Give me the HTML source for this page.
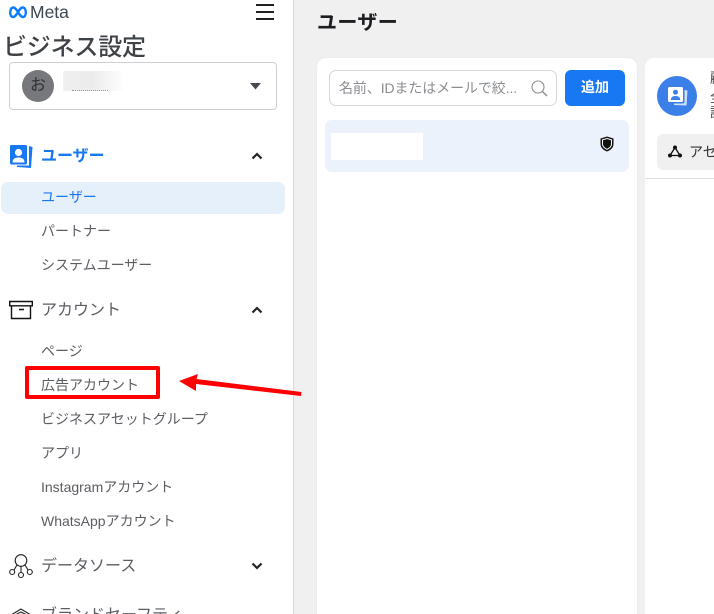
<!DOCTYPE html>
<html lang="ja"><head><meta charset="utf-8"><title>ビジネス設定</title>
<style>
html,body{margin:0;padding:0;width:714px;height:614px;overflow:hidden;background:#f0f0f0}
body{position:relative;font-family:"Liberation Sans","Noto Sans CJK JP",sans-serif;color:#444950}
.a{position:absolute;white-space:nowrap}
.sub{position:absolute;left:41px;font-size:14px;line-height:20px;color:#5a5d62;white-space:nowrap}
.sec{position:absolute;left:41px;font-size:16px;line-height:22px;color:#5a5d62;white-space:nowrap}
svg{position:absolute;overflow:visible}
</style></head><body>
<div class="a" style="left:0;top:0;width:293px;height:614px;background:#fff;border-right:1px solid #d8d8d8"></div>

<svg style="left:9px;top:6px" width="18" height="13" viewBox="0 0 18 13"><path d="M4.500 1.500C2.300 1.500 1.200 3.800 1.200 6.500 1.200 9.300 2.400 11 4.200 11 6 11 7.200 9 9 6 11 3 12 1.500 13.600 1.500 15.700 1.500 16.800 3.800 16.800 6.500 16.800 9.300 15.600 11 13.800 11 12 11 10.800 9 9 6 7 3 6 1.500 4.500 1.500Z" fill="none" stroke="#0a7cff" stroke-width="2.400"/></svg>
<div class="a" style="left:30px;top:2px;font-size:17.500px;line-height:20px;color:#3c4650">Meta</div>
<div class="a" style="left:256px;top:4px;width:18px;height:2px;background:#222"></div>
<div class="a" style="left:256px;top:11px;width:18px;height:2px;background:#222"></div>
<div class="a" style="left:256px;top:18px;width:18px;height:2px;background:#222"></div>

<div class="a" style="left:3px;top:32px;font-size:24px;line-height:32px;font-weight:500;color:#3f4347;letter-spacing:-.2px">ビジネス設定</div>

<div class="a" style="left:9px;top:62px;width:266px;height:46px;border:1px solid #ccd0d5;border-radius:4px;background:#fff"></div>
<div class="a" style="left:22px;top:70px;width:32px;height:32px;border-radius:50%;background:#77787c;color:#2c3036;font-size:16px;line-height:32px;text-align:center">お</div>
<div class="a" style="left:63px;top:71px;width:62px;height:20px;background:linear-gradient(90deg,#f0f0f0,#ebebeb 45%,#f9f9f9 85%,#fff)"></div>
<div class="a" style="left:72px;top:90px;width:36px;height:1px;border-top:1px dotted #999"></div>
<svg style="left:250px;top:83px" width="12" height="8"><path d="M0 0H11L5.500 6.500Z" fill="#444950"/></svg>

<svg style="left:9px;top:143px" width="24" height="25" viewBox="0 0 24 25"><rect x="1" y="2" width="17" height="19.500" rx="1.500" fill="#1877f2"/><path d="M20 3 23.500 4 22 25 8 24 8 22.500 20 22.500Z" fill="#1877f2"/><circle cx="9.500" cy="9.500" r="3.600" fill="#fff"/><path d="M3.500 19.500C3.500 15.500 6.500 14.500 9.500 14.500S15.500 15.500 15.500 19.500Z" fill="#fff"/></svg>
<div class="sec" style="top:146px;color:#1877f2;font-weight:700">ユーザー</div>
<svg style="left:251px;top:152px" width="12" height="8"><path d="M1.500 6.500 6 2 10.500 6.500" fill="none" stroke="#222" stroke-width="2.200"/></svg>

<div class="a" style="left:1px;top:182px;width:284px;height:32px;background:#e6f0fb;border-radius:7px"></div>
<div class="sub" style="top:187px;color:#1877f2">ユーザー</div>
<div class="sub" style="top:221px">パートナー</div>
<div class="sub" style="top:255px">システムユーザー</div>

<svg style="left:9px;top:300px" width="24" height="20" viewBox="0 0 24 20"><path d="M.7 1.500H23.300V5.800H.7ZM2.500 5.800V18.500H21.500V5.800M10 9.500H15" fill="none" stroke="#111" stroke-width="1.400"/></svg>
<div class="sec" style="top:300px">アカウント</div>
<svg style="left:251px;top:306px" width="12" height="8"><path d="M1.500 6.500 6 2 10.500 6.500" fill="none" stroke="#222" stroke-width="2.200"/></svg>

<div class="sub" style="top:341px">ページ</div>
<div class="sub" style="top:375px">広告アカウント</div>
<div class="sub" style="top:409px">ビジネスアセットグループ</div>
<div class="sub" style="top:443px">アプリ</div>
<div class="sub" style="top:477px">Instagramアカウント</div>
<div class="sub" style="top:511px">WhatsAppアカウント</div>

<svg style="left:9px;top:554px" width="25" height="24" viewBox="0 0 25 24" fill="none" stroke="#222" stroke-width="1.100"><circle cx="12" cy="6.500" r="5.800"/><circle cx="3.200" cy="18" r="2.500"/><circle cx="12" cy="21" r="2.500"/><circle cx="20.800" cy="18" r="2.500"/><path d="M8 11 5 16M12 12.300V18.500M16 11 19 16"/></svg>
<div class="sec" style="top:556px">データソース</div>
<svg style="left:251px;top:562px" width="12" height="8"><path d="M1.500 1.500 6 6 10.500 1.500" fill="none" stroke="#222" stroke-width="2.200"/></svg>

<svg style="left:9px;top:608px" width="24" height="12" fill="none" stroke="#222" stroke-width="1.100"><path d="M2 7 12 1 22 7M6 7 12 4 18 7"/></svg>
<div class="sec" style="top:605px">ブランドセーフティ</div>

<svg style="left:0;top:0" width="714" height="614"><path d="M179 381 198 374 196.500 379 301.500 392 301 396 196 384 196 391Z" fill="#f00"/></svg>
<div class="a" style="left:25px;top:366px;width:127px;height:25px;border:4px solid #f00;border-radius:2px"></div>

<div class="a" style="left:317px;top:10px;font-size:20px;line-height:27px;font-weight:700;color:#1c1e21;letter-spacing:.4px">ユーザー</div>

<div class="a" style="left:317px;top:58px;width:320px;height:570px;background:#fff;border-radius:9px;box-shadow:0 0 2px rgba(0,0,0,.06)"></div>
<div class="a" style="left:329px;top:70px;width:226px;height:34px;border:1px solid #d5d7da;border-radius:7px;background:#fff"></div>
<div class="a" style="left:339px;top:78px;font-size:14px;line-height:20px;color:#8a8d91;letter-spacing:-.1px">名前、IDまたはメールで絞...</div>
<svg style="left:531px;top:80px" width="17" height="17" fill="none" stroke="#8a8d91" stroke-width="1.100"><circle cx="7" cy="7" r="6"/><path d="M11.500 11.500 16 16" stroke-width="1.400"/></svg>
<div class="a" style="left:565px;top:70px;width:60px;height:36px;background:#1877f2;border-radius:6px;color:#fff;font-size:14px;font-weight:700;line-height:34px;text-align:center">追加</div>

<div class="a" style="left:325px;top:120px;width:304px;height:52px;background:#ebf2fc;border-radius:7px"></div>
<div class="a" style="left:331px;top:133px;width:92px;height:27px;background:#fff"></div>
<svg style="left:600px;top:136px" width="14" height="16" viewBox="0 0 14 16"><path d="M7 .5 13.500 2.500V8C13.500 12 10 14.500 7 15.500 4 14.500.5 12 .5 8V2.500Z" fill="#111"/><path d="M7 2 12 3.500V8C12 11 9 13 7 13.900 5 13 2 11 2 8V3.500Z" fill="#fff"/><path d="M7 3 11 4.300V8C11 10.300 8.700 12 7 12.800 5.300 12 3 10.300 3 8V4.300Z" fill="#111"/></svg>

<div class="a" style="left:645px;top:58px;width:80px;height:120px;background:#fff;border-radius:9px 0 0 0;border-bottom:1px solid #dddfe6"></div>
<div class="a" style="left:645px;top:179px;width:80px;height:440px;background:#fff"></div>
<div class="a" style="left:657px;top:76px;width:40px;height:40px;border-radius:50%;background:#3b7fe8"></div>
<svg style="left:668px;top:87px" width="21" height="20" viewBox="0 0 21 20"><path d="M1.500 0H13.500Q15 0 15 1.500V13.500Q15 15 13.500 15H1.500Q0 15 0 13.500V1.500Q0 0 1.500 0Z" fill="#fff"/><circle cx="7.500" cy="5.200" r="2.500" fill="#3b7fe8"/><path d="M2.800 13C2.800 10 5 9 7.500 9S12.200 10 12.200 13Z" fill="#3b7fe8"/><path d="M16.500 3 19.500 3.500 18.500 18.500 6 18 6 16.500H15Q16.500 16.500 16.500 15Z" fill="#cfe0fa"/></svg>
<div class="a" style="left:710px;top:69px;font-size:14px;line-height:18px;color:#444">顧</div>
<div class="a" style="left:710px;top:90px;font-size:13px;line-height:15px;color:#444">全<br>認</div>
<div class="a" style="left:657px;top:134px;width:70px;height:36px;background:#f0f0f0;border-radius:6px"></div>
<svg style="left:668px;top:145px" width="14" height="13" viewBox="0 0 14 13"><path d="M7 2.500 2 10.500H12Z" fill="none" stroke="#111" stroke-width="1.300"/><circle cx="7" cy="2.500" r="2" fill="#111"/><circle cx="2" cy="10.500" r="2" fill="#111"/><circle cx="12" cy="10.500" r="2" fill="#111"/></svg>
<div class="a" style="left:689px;top:142px;font-size:14px;line-height:20px;color:#333">アセット</div>
</body></html>
